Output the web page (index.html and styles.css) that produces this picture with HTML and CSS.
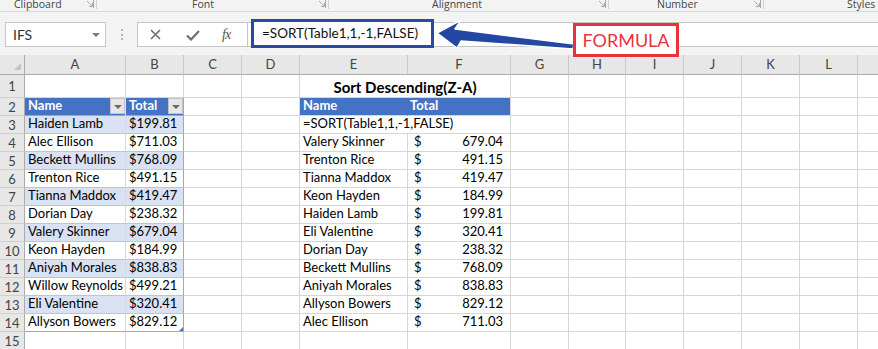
FILE: index.html
```html
<!DOCTYPE html>
<html lang="en">
<head>
  <meta charset="UTF-8" />
  <title>Sort Descending – SORT formula</title>
  <link rel="stylesheet" href="styles.css">
</head>
<body>
  <div class="ribbon">
    <div class="group g-clip"><span class="glabel">Clipboard</span><svg class="launch" width="8" height="8" viewBox="0 0 8 8"><path d="M1 1l5 5M3 6.5h3.5V3M7.5 0v8" /></svg></div>
    <div class="group g-font"><span class="glabel">Font</span><svg class="launch" width="8" height="8" viewBox="0 0 8 8"><path d="M1 1l5 5M3 6.5h3.5V3M7.5 0v8" /></svg></div>
    <div class="group g-align"><span class="glabel">Alignment</span><svg class="launch" width="8" height="8" viewBox="0 0 8 8"><path d="M1 1l5 5M3 6.5h3.5V3M7.5 0v8" /></svg></div>
    <div class="group g-num"><span class="glabel">Number</span><svg class="launch" width="8" height="8" viewBox="0 0 8 8"><path d="M1 1l5 5M3 6.5h3.5V3M7.5 0v8" /></svg></div>
    <div class="group g-styles"><span class="glabel">Styles</span></div>
  </div>

  <div class="fbar">
    <div class="namebox"><span>IFS</span><span class="caret"></span></div>
    <div class="grip"></div>
    <div class="fxbox">
      <svg class="ic-x" width="11" height="11" viewBox="0 0 11 11"><path d="M1 1l9 9M10 1l-9 9" /></svg>
      <svg class="ic-ok" width="14" height="11" viewBox="0 0 14 11"><path d="M1 5.5l4 4L13 1" /></svg>
      <span class="ic-fx">fx</span>
    </div>
    <div class="finput"></div>
  </div>

  <div class="callout">=SORT(Table1,1,-1,FALSE)</div>
  <svg class="arrow" width="146" height="38" viewBox="0 0 146 38">
    <polygon points="5,18 29,5 23,14 142,29 141,34 29,26 25,33" />
  </svg>
  <div class="label">FORMULA</div>

  <div class="sheet">
    <div class="row hdr">
      <div class="corner"></div><div>A</div><div>B</div><div>C</div><div>D</div><div>E</div><div>F</div><div>G</div><div>H</div><div>I</div><div>J</div><div>K</div><div>L</div><div>M</div>
    </div>
    <div class="row r1">
      <div class="rh">1</div><div></div><div></div><div></div><div></div>
      <div class="title">Sort Descending(Z-A)</div>
      <div></div><div></div><div></div><div></div><div></div><div></div><div></div>
    </div>
    <div class="row">
      <div class="rh">2</div>
      <div class="th"><span>Name</span><span class="dd"></span></div>
      <div class="th th-last"><span>Total</span><span class="dd"></span></div>
      <div></div><div></div>
      <div class="th2 th2-first">Name</div><div class="th2">Total</div>
      <div></div><div></div><div></div><div></div><div></div><div></div><div></div>
    </div>
    <div class="row band">
      <div class="rh">3</div><div class="tn">Haiden Lamb</div><div class="tt">$199.81</div><div></div><div></div>
      <div class="fx-cell">=SORT(Table1,1,-1,FALSE)</div>
      <div></div><div></div><div></div><div></div><div></div><div></div><div></div>
    </div>
    <div class="row">
      <div class="rh">4</div><div class="tn">Alec Ellison</div><div class="tt">$711.03</div><div></div><div></div>
      <div class="nm">Valery Skinner</div><div class="acc"><span>$</span><span>679.04</span></div>
      <div></div><div></div><div></div><div></div><div></div><div></div><div></div>
    </div>
    <div class="row band">
      <div class="rh">5</div><div class="tn">Beckett Mullins</div><div class="tt">$768.09</div><div></div><div></div>
      <div class="nm">Trenton Rice</div><div class="acc"><span>$</span><span>491.15</span></div>
      <div></div><div></div><div></div><div></div><div></div><div></div><div></div>
    </div>
    <div class="row">
      <div class="rh">6</div><div class="tn">Trenton Rice</div><div class="tt">$491.15</div><div></div><div></div>
      <div class="nm">Tianna Maddox</div><div class="acc"><span>$</span><span>419.47</span></div>
      <div></div><div></div><div></div><div></div><div></div><div></div><div></div>
    </div>
    <div class="row band">
      <div class="rh">7</div><div class="tn">Tianna Maddox</div><div class="tt">$419.47</div><div></div><div></div>
      <div class="nm">Keon Hayden</div><div class="acc"><span>$</span><span>184.99</span></div>
      <div></div><div></div><div></div><div></div><div></div><div></div><div></div>
    </div>
    <div class="row">
      <div class="rh">8</div><div class="tn">Dorian Day</div><div class="tt">$238.32</div><div></div><div></div>
      <div class="nm">Haiden Lamb</div><div class="acc"><span>$</span><span>199.81</span></div>
      <div></div><div></div><div></div><div></div><div></div><div></div><div></div>
    </div>
    <div class="row band">
      <div class="rh">9</div><div class="tn">Valery Skinner</div><div class="tt">$679.04</div><div></div><div></div>
      <div class="nm">Eli Valentine</div><div class="acc"><span>$</span><span>320.41</span></div>
      <div></div><div></div><div></div><div></div><div></div><div></div><div></div>
    </div>
    <div class="row">
      <div class="rh">10</div><div class="tn">Keon Hayden</div><div class="tt">$184.99</div><div></div><div></div>
      <div class="nm">Dorian Day</div><div class="acc"><span>$</span><span>238.32</span></div>
      <div></div><div></div><div></div><div></div><div></div><div></div><div></div>
    </div>
    <div class="row band">
      <div class="rh">11</div><div class="tn">Aniyah Morales</div><div class="tt">$838.83</div><div></div><div></div>
      <div class="nm">Beckett Mullins</div><div class="acc"><span>$</span><span>768.09</span></div>
      <div></div><div></div><div></div><div></div><div></div><div></div><div></div>
    </div>
    <div class="row">
      <div class="rh">12</div><div class="tn">Willow Reynolds</div><div class="tt">$499.21</div><div></div><div></div>
      <div class="nm">Aniyah Morales</div><div class="acc"><span>$</span><span>838.83</span></div>
      <div></div><div></div><div></div><div></div><div></div><div></div><div></div>
    </div>
    <div class="row band">
      <div class="rh">13</div><div class="tn">Eli Valentine</div><div class="tt">$320.41</div><div></div><div></div>
      <div class="nm">Allyson Bowers</div><div class="acc"><span>$</span><span>829.12</span></div>
      <div></div><div></div><div></div><div></div><div></div><div></div><div></div>
    </div>
    <div class="row last">
      <div class="rh">14</div><div class="tn">Allyson Bowers</div><div class="tt handle">$829.12</div><div></div><div></div>
      <div class="nm">Alec Ellison</div><div class="acc"><span>$</span><span>711.03</span></div>
      <div></div><div></div><div></div><div></div><div></div><div></div><div></div>
    </div>
    <div class="row">
      <div class="rh">15</div><div></div><div></div><div></div><div></div><div></div><div></div>
      <div></div><div></div><div></div><div></div><div></div><div></div><div></div>
    </div>
  </div>
</body>
</html>
```

FILE: styles.css
```css
body {
  margin: 0;
  width: 878px;
  height: 349px;
  overflow: hidden;
  position: relative;
  background: #fff;
  font-family: Lato, 'Liberation Sans', sans-serif;
}

/* ribbon strip (cut off at the top) */
.ribbon {
  height: 11px;
  display: flex;
  overflow: hidden;
  background: #f3f3f3;
  border-bottom: 1px solid #d8d8d8;
  box-shadow: 0 1px 2px rgba(0, 0, 0, 0.08);
  font: 10.5px 'Open Sans', sans-serif;
  color: #444;
}
.group {
  display: flex;
  height: 9px;
  box-sizing: border-box;
  border-right: 1px solid #d2d2d2;
}
.glabel {
  line-height: 11px;
  margin-top: -1px;
  white-space: nowrap;
}
.launch {
  margin-left: auto;
  margin-right: 2px;
  fill: none;
  stroke: #a8a8a8;
  stroke-width: 1;
}
.g-clip { width: 97px; }
.g-clip .glabel { margin-left: 14px; }
.g-font { width: 232px; }
.g-font .glabel { margin-left: 95px; }
.g-align { width: 280px; }
.g-align .glabel { margin-left: 103px; }
.g-num { width: 155px; }
.g-num .glabel { margin-left: 48px; }
.g-styles { flex: 1; border-right: none; }
.g-styles .glabel { margin-left: 83px; }

/* formula bar */
.fbar {
  height: 43px;
  box-sizing: border-box;
  padding-top: 10px;
  display: flex;
  align-items: flex-start;
  background: #f3f3f3;
}
.namebox, .fxbox, .finput {
  height: 25px;
  box-sizing: border-box;
  background: #fff;
  border: 1px solid #c6c6c6;
}
.namebox {
  width: 101px;
  margin-left: 5px;
  padding: 0 5px 0 7px;
  display: flex;
  align-items: center;
  justify-content: space-between;
  font-size: 14px;
  color: #333;
}
.caret {
  width: 0;
  height: 0;
  border-left: 4px solid transparent;
  border-right: 4px solid transparent;
  border-top: 4px solid #7a7a7a;
  margin-top: 1px;
}
.grip {
  width: 0;
  height: 11px;
  margin: 7px 0 0 15px;
  border-left: 2px dotted #b4b4b4;
}
.fxbox {
  width: 111px;
  margin-left: 14px;
  padding-left: 12px;
  display: flex;
  align-items: center;
}
.ic-x path {
  stroke: #6f6f6f;
  stroke-width: 1.6;
}
.ic-ok {
  margin-left: 25px;
  margin-top: 2px;
}
.ic-ok path {
  fill: none;
  stroke: #6f6f6f;
  stroke-width: 2.2;
}
.ic-fx {
  margin-left: 22px;
  font: italic 14px 'Liberation Serif', serif;
  color: #555;
  letter-spacing: -1px;
}
.finput {
  flex: 1;
  margin-left: -1px;
  border-right: none;
}

/* annotations */
.callout {
  position: absolute;
  left: 251px;
  top: 19px;
  width: 183px;
  height: 29px;
  box-sizing: border-box;
  border: 3px solid #2a4a9e;
  background: #fff;
  padding-left: 8px;
  font-size: 13.5px;
  line-height: 23px;
  color: #111;
  white-space: nowrap;
}
.arrow {
  position: absolute;
  left: 432px;
  top: 15px;
}
.arrow polygon {
  fill: #2348a3;
  stroke: #fff;
  stroke-width: 1.5;
  stroke-linejoin: round;
}
.label {
  position: absolute;
  left: 573px;
  top: 23px;
  width: 106px;
  height: 34px;
  box-sizing: border-box;
  border: 3px solid #e8333c;
  background: #fff;
  color: #e8333c;
  font-size: 18px;
  line-height: 28px;
  text-align: center;
}

/* sheet grid */
.sheet {
  font-size: 13px;
  color: #000;
}
.row {
  display: grid;
  grid-template-columns: 25px 101px 58px 58px 58px 108px 103px 58px 57px 58px 58px 58px 58px 58px;
  height: 18px;
}
.row > div {
  box-sizing: border-box;
  border-right: 1px solid #d6d6d6;
  border-bottom: 1px solid #d6d6d6;
  padding: 0 3px;
  line-height: 15px;
  white-space: nowrap;
  overflow: hidden;
}
.hdr {
  height: 20px;
  background: #e7e7e7;
}
.hdr > div {
  text-align: center;
  color: #444;
  line-height: 19px;
  border-right-color: #c9c9c9;
  border-bottom-color: #ababab;
}
.hdr > .corner {
  position: relative;
  border-right-color: #ababab;
}
.corner::after {
  content: "";
  position: absolute;
  right: 3px;
  bottom: 4px;
  border-left: 7px solid transparent;
  border-bottom: 7px solid #c2c2c2;
}
.row > .rh {
  display: flex;
  align-items: center;
  justify-content: center;
  padding: 0;
  padding-top: 1px;
  background: #e7e7e7;
  color: #444;
  border-right-color: #ababab;
  border-bottom-color: #d0d0d0;
}
.r1 { height: 23px; }
.row > .title {
  grid-column: span 2;
  text-align: center;
  font-weight: bold;
  font-size: 15px;
  line-height: 18px;
  padding-top: 3px;
}

/* source table */
.row > .th {
  display: flex;
  justify-content: space-between;
  padding: 0 0 0 3px;
  background: #4472c4;
  color: #fff;
  font-weight: bold;
  border-bottom-color: #8ea9db;
  border-right-color: #dfe5f0;
}
.row > .th-last { border-right-color: #8ea9db; }
.dd {
  position: relative;
  width: 15px;
  height: 16px;
  box-sizing: border-box;
  background: #e6e6e6;
  border: 1px solid #c3c3c3;
}
.dd::after {
  content: "";
  position: absolute;
  left: 3px;
  top: 6px;
  border-left: 4px solid transparent;
  border-right: 4px solid transparent;
  border-top: 4px solid #6a6a6a;
}
.row > .tn,
.row > .tt {
  border-bottom-color: #b4c6e7;
}
.row > .tn { border-right-color: #d3d9e6; }
.row > .tt {
  text-align: right;
  padding-right: 6px;
  border-right-color: #8ea9db;
}
.band > .tn,
.band > .tt {
  background: #d9e1f2;
}
.last > .tn,
.last > .tt {
  border-bottom-color: #8ea9db;
}
.row > .handle { position: relative; }
.handle::after {
  content: "";
  position: absolute;
  right: 0;
  bottom: 0;
  border-left: 4px solid transparent;
  border-bottom: 4px solid #4472c4;
}

/* sorted result */
.row > .th2 {
  background: #4472c4;
  color: #fff;
  font-weight: bold;
  padding-left: 2px;
}
.row > .th2-first {
  padding-left: 3px;
  border-right-color: #4472c4;
}
.row > .fx-cell {
  grid-column: span 2;
}
.row > .acc {
  display: flex;
  justify-content: space-between;
  padding: 0 7px 0 6px;
}
```
